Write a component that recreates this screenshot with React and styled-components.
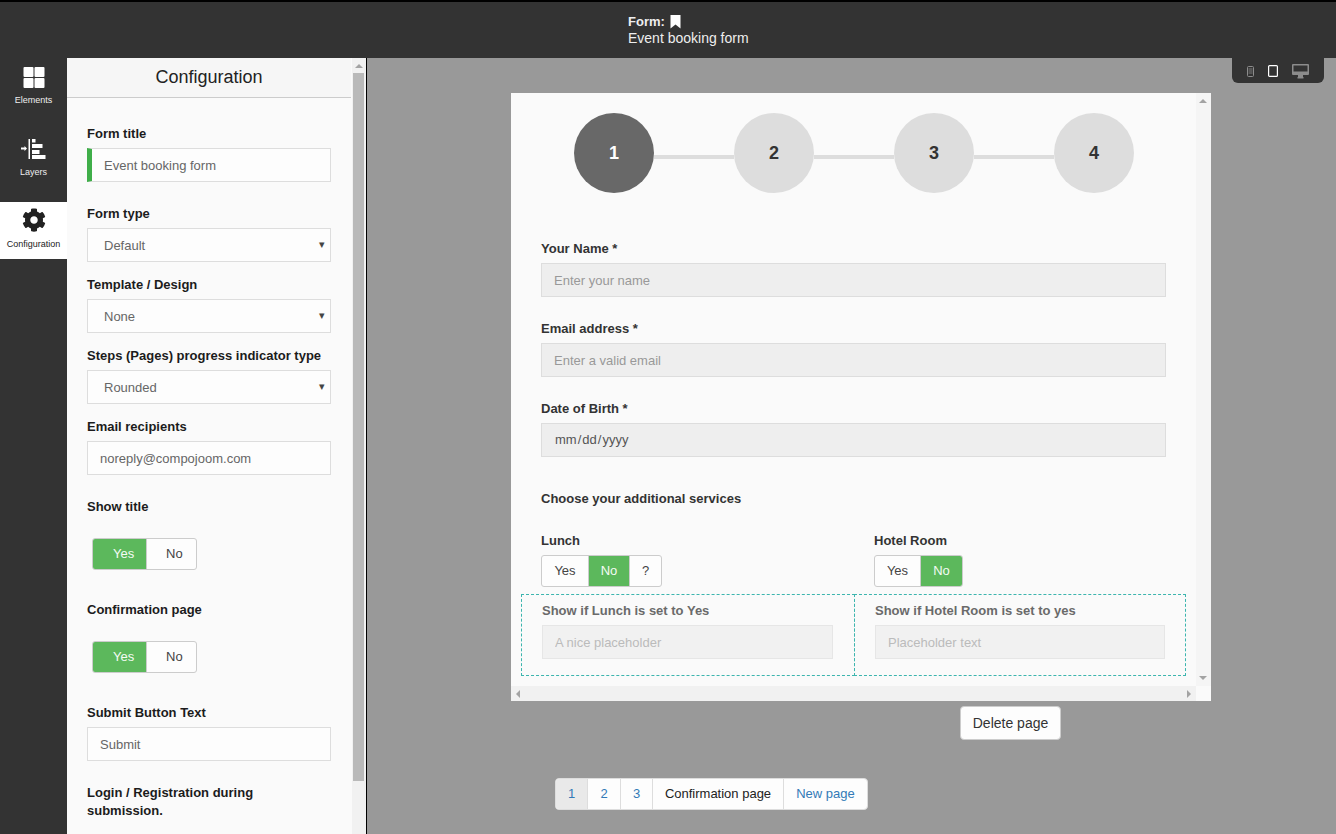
import styled, { createGlobalStyle } from "styled-components";
import { FaCog } from "react-icons/fa";

const GlobalStyle = createGlobalStyle`
  html, body {
    margin: 0;
    padding: 0;
    height: 100%;
    overflow: hidden;
    font-family: "Liberation Sans", Arial, sans-serif;
  }
  * {
    box-sizing: border-box;
  }
`;

const Page = styled.div`
  width: 1336px;
  height: 834px;
  display: flex;
  flex-direction: column;
  overflow: hidden;
  background: #333;
`;

const Header = styled.header`
  height: 58px;
  flex: none;
  border-top: 2px solid #000;
  padding: 11px 0 0 628px;
  background: #333;
  color: #eee;
  font-size: 14px;
  line-height: 17px;
`;

const HeaderTop = styled.div`
  display: flex;
  align-items: center;
  gap: 5px;
  font-size: 13px;
  font-weight: bold;
`;

const Body = styled.div`
  flex: 1;
  display: flex;
  min-height: 0;
`;

const Sidebar = styled.nav`
  width: 67px;
  flex: none;
  background: #333;
`;

const SideItem = styled.div`
  height: ${(p) => (p.$active ? "57px" : "72px")};
  padding-top: ${(p) => p.$top}px;
  display: flex;
  flex-direction: column;
  align-items: center;
  background: ${(p) => (p.$active ? "#fff" : "#333")};
  color: ${(p) => (p.$active ? "#222" : "#eee")};
  font-size: 9px;
  line-height: 11px;
  svg {
    display: block;
    flex: none;
  }
`;

const SideLabel = styled.span`
  margin-top: ${(p) => p.$gap}px;
`;

const Panel = styled.aside`
  width: 300px;
  flex: none;
  display: flex;
  background: #fafafa;
  border-right: 1px solid #000;
`;

const PanelBody = styled.div`
  width: 285px;
  flex: none;
  overflow: hidden;
`;

const PanelTitle = styled.h2`
  margin: 0 1px 0 0;
  height: 40px;
  background: #f6f6f6;
  border-bottom: 1px solid #ccc;
  color: #222;
  font-size: 18px;
  font-weight: normal;
  line-height: 38px;
  text-align: center;
`;

const PanelForm = styled.div`
  padding: 27px 20px 0;
`;

const PanelField = styled.div`
  margin-bottom: ${(p) => p.$after ?? 14}px;
`;

const PanelLabel = styled.label`
  display: block;
  margin-bottom: ${(p) => p.$gap ?? 5}px;
  color: #1c1c1c;
  font-size: 13px;
  font-weight: bold;
  line-height: 18px;
`;

const PanelInput = styled.input`
  display: block;
  width: 244px;
  height: 34px;
  background: #fdfdfd;
  border: 1px solid #ddd;
  border-left: ${(p) => (p.$marked ? "5px solid #3fae49" : "1px solid #ddd")};
  padding: 0 12px;
  color: #666;
  font-family: inherit;
  font-size: 13px;
  outline: none;
`;

const SelectWrap = styled.div`
  position: relative;
  width: 244px;
  &::after {
    content: "▾";
    position: absolute;
    top: 8px;
    right: 6px;
    color: #444;
    font-size: 11px;
    line-height: 16px;
  }
`;

const PanelSelect = styled.select`
  display: block;
  width: 100%;
  height: 34px;
  padding: 0 16px;
  appearance: none;
  background: #fdfdfd;
  border: 1px solid #ddd;
  border-radius: 0;
  color: #666;
  font-family: inherit;
  font-size: 13px;
  outline: none;
`;

const ToggleRow = styled.div`
  padding-left: 5px;
`;

const BtnGroup = styled.div`
  display: inline-flex;
  height: 32px;
  border: 1px solid #ccc;
  border-radius: 3px;
  background: #fdfdfd;
  overflow: hidden;
`;

const Btn = styled.span`
  width: ${(p) => p.$w}px;
  padding-left: ${(p) => p.$pad ?? 0}px;
  padding-bottom: 1px;
  display: flex;
  align-items: center;
  justify-content: ${(p) => (p.$pad ? "flex-start" : "center")};
  background: ${(p) => (p.$on ? "#5cb85c" : "transparent")};
  border-left: ${(p) => (p.$split ? "1px solid #ccc" : "none")};
  color: ${(p) => (p.$on ? "#f4fbf4" : "#444")};
  font-size: 13px;
`;

const Scrollbar = styled.div`
  width: 14px;
  flex: none;
  position: relative;
  background: #f1f1f1;
`;

const Thumb = styled.div`
  position: absolute;
  top: 15px;
  left: 1px;
  width: 11px;
  height: 708px;
  background: #b9b9b9;
`;

const Arrow = styled.i`
  position: absolute;
  width: 0;
  height: 0;
  ${(p) => p.$at};
  ${(p) =>
    p.$dir === "up" &&
    `border-left: 4px solid transparent; border-right: 4px solid transparent; border-bottom: 4px solid #a3a3a3;`}
  ${(p) =>
    p.$dir === "down" &&
    `border-left: 4px solid transparent; border-right: 4px solid transparent; border-top: 4px solid #a3a3a3;`}
  ${(p) =>
    p.$dir === "left" &&
    `border-top: 4px solid transparent; border-bottom: 4px solid transparent; border-right: 4px solid #a3a3a3;`}
  ${(p) =>
    p.$dir === "right" &&
    `border-top: 4px solid transparent; border-bottom: 4px solid transparent; border-left: 4px solid #a3a3a3;`}
`;

const Main = styled.main`
  flex: 1;
  position: relative;
  padding: 35px 0 0 144px;
  background: #999;
`;

const DeviceBar = styled.div`
  position: absolute;
  top: 0;
  right: 12px;
  width: 92px;
  height: 25px;
  display: flex;
  align-items: center;
  gap: 14px;
  padding: 1px 0 0 15px;
  background: #333;
  border-radius: 0 0 6px 6px;
  svg {
    display: block;
    flex: none;
  }
`;

const Canvas = styled.section`
  width: 700px;
  height: 608px;
  display: grid;
  grid-template-columns: 685px 15px;
  grid-template-rows: 593px 15px;
  background: #fafafa;
`;

const CanvasContent = styled.div`
  overflow: hidden;
  padding: 20px 0 0 30px;
`;

const CanvasVBar = styled.div`
  position: relative;
  background: #f5f5f5;
`;

const CanvasHBar = styled.div`
  position: relative;
  background: #f1f1f1;
`;

const CanvasCorner = styled.div`
  background: #fafafa;
`;

const Steps = styled.div`
  display: flex;
  align-items: center;
  margin: 0 0 47px 33px;
`;

const StepCircle = styled.div`
  width: 80px;
  height: 80px;
  flex: none;
  display: flex;
  align-items: center;
  justify-content: center;
  border-radius: 50%;
  background: ${(p) => (p.$current ? "#686868" : "#ddd")};
  color: ${(p) => (p.$current ? "#fff" : "#333")};
  font-size: 18px;
  font-weight: bold;
`;

const StepLine = styled.div`
  width: 80px;
  height: 4px;
  margin-top: 8px;
  flex: none;
  background: #ddd;
`;

const Field = styled.div`
  margin-bottom: ${(p) => p.$after ?? 23}px;
`;

const FieldLabel = styled.label`
  display: block;
  margin-bottom: 5px;
  color: ${(p) => (p.$muted ? "#6a6a6a" : "#333")};
  font-size: 13px;
  font-weight: bold;
  line-height: 18px;
`;

const FieldInput = styled.input`
  display: block;
  width: ${(p) => p.$w ?? 625}px;
  height: 34px;
  padding: 0 12px;
  background: ${(p) => (p.$muted ? "#f1f1f1" : "#eee")};
  border: 1px solid ${(p) => (p.$muted ? "#e6e6e6" : "#ddd")};
  color: #555;
  font-family: inherit;
  font-size: 13px;
  outline: none;
  &[type="date"] {
    padding-bottom: 2px;
  }
  &::placeholder {
    color: ${(p) => (p.$muted ? "#bbb" : "#999")};
    opacity: 1;
  }
  &::-webkit-calendar-picker-indicator {
    display: none;
  }
`;

const SectionTitle = styled.div`
  margin: 33px 0 24px;
  color: #333;
  font-size: 13px;
  font-weight: bold;
  line-height: 18px;
`;

const Columns = styled.div`
  display: flex;
  margin-bottom: 7px;
`;

const Column = styled.div`
  width: ${(p) => p.$w}px;
  flex: none;
`;

const CondRow = styled.div`
  display: flex;
  margin-left: -20px;
  width: 665px;
`;

const CondBox = styled.div`
  width: ${(p) => p.$w}px;
  height: 82px;
  flex: none;
  margin-left: ${(p) => (p.$tail ? "-1px" : "0")};
  padding: 7px 0 0 20px;
  border: 1px dashed #3cb5ae;
`;

const FooterRow = styled.div`
  width: 700px;
`;

const DeleteBtn = styled.button`
  display: block;
  width: 101px;
  height: 34px;
  margin: 5px 0 38px 449px;
  padding: 0;
  background: #fdfdfd;
  border: 1px solid #ccc;
  border-radius: 4px;
  color: #333;
  font-family: inherit;
  font-size: 14px;
`;

const Pager = styled.ul`
  display: inline-flex;
  height: 32px;
  margin: 0 0 0 44px;
  padding: 0;
  list-style: none;
  background: #fdfdfd;
  border: 1px solid #ddd;
  border-radius: 4px;
  overflow: hidden;
`;

const PagerItem = styled.li`
  width: ${(p) => p.$w}px;
  flex: none;
  padding-bottom: 1px;
  display: flex;
  align-items: center;
  justify-content: center;
  background: ${(p) => (p.$on ? "#e9e9e9" : "transparent")};
  border-left: ${(p) => (p.$first ? "none" : "1px solid #ddd")};
  color: ${(p) => (p.$plain ? "#222" : "#337ab7")};
  font-size: 13px;
`;

const Bookmark = () => (
  <svg width="11" height="14" viewBox="0 0 11 14" fill="#fff">
    <path d="M0.5 0H10.5V13.5L5.5 9.5L0.5 13.5Z" />
  </svg>
);

const GridIcon = () => (
  <svg width="22" height="22" viewBox="0 0 22 22" fill="#fff">
    <rect x="0.5" y="0" width="10" height="10" rx="1" />
    <rect x="11.5" y="0" width="10" height="10" rx="1" />
    <rect x="0.5" y="11" width="10" height="10" rx="1" />
    <rect x="11.5" y="11" width="10" height="10" rx="1" />
  </svg>
);

const LayersIcon = () => (
  <svg width="25" height="22" viewBox="0 0 25 22" fill="#fff">
    <path d="M0 9.5H3.5V8L6 10.5L3.5 13V11.5H0Z" />
    <rect x="7.5" y="1" width="1.5" height="20" />
    <rect x="11" y="1" width="3.5" height="3.5" />
    <rect x="11" y="6" width="10.5" height="4" />
    <rect x="11" y="12" width="7.5" height="4" />
    <rect x="11" y="17" width="13.5" height="4" />
  </svg>
);

const PhoneIcon = () => (
  <svg width="7" height="11" viewBox="0 0 7 11">
    <rect x="0.5" y="0.5" width="6" height="10" rx="1" fill="none" stroke="#8c8c8c" />
    <rect x="1.5" y="2" width="4" height="6" fill="#555" />
  </svg>
);

const TabletIcon = () => (
  <svg width="10" height="12" viewBox="0 0 10 12">
    <rect x="0.6" y="0.6" width="8.8" height="10.8" rx="1" fill="none" stroke="#fff" strokeWidth="1.2" />
  </svg>
);

const DesktopIcon = () => (
  <svg width="17" height="15" viewBox="0 0 17 15" fill="#8c8c8c">
    <path d="M1 0H16A1 1 0 0 1 17 1V10A1 1 0 0 1 16 11H1A1 1 0 0 1 0 10V1A1 1 0 0 1 1 0ZM1.5 1.5V7.5H15.5V1.5Z" fillRule="evenodd" />
    <rect x="6" y="11" width="5" height="2" />
    <rect x="5.5" y="13" width="6" height="1.5" />
  </svg>
);

const selectFields = [
  { label: "Form type", value: "Default" },
  { label: "Template / Design", value: "None" },
  { label: "Steps (Pages) progress indicator type", value: "Rounded" },
];

const mainFields = [
  { label: "Your Name *", placeholder: "Enter your name" },
  { label: "Email address *", placeholder: "Enter a valid email" },
];

const noop = () => {};

const App = () => {
  return (
    <Page>
      <GlobalStyle />
      <Header>
        <HeaderTop>
          Form: <Bookmark />
        </HeaderTop>
        <div>Event booking form</div>
      </Header>
      <Body>
        <Sidebar>
          <SideItem $top={9}>
            <GridIcon />
            <SideLabel $gap={6}>Elements</SideLabel>
          </SideItem>
          <SideItem $top={8}>
            <LayersIcon />
            <SideLabel $gap={7}>Layers</SideLabel>
          </SideItem>
          <SideItem $active $top={6}>
            <FaCog size={24} color="#222" />
            <SideLabel $gap={7}>Configuration</SideLabel>
          </SideItem>
        </Sidebar>

        <Panel>
          <PanelBody>
            <PanelTitle>Configuration</PanelTitle>
            <PanelForm>
              <PanelField $after={23}>
                <PanelLabel>Form title</PanelLabel>
                <PanelInput $marked readOnly value="Event booking form" onChange={noop} />
              </PanelField>
              {selectFields.map((f) => (
                <PanelField key={f.label}>
                  <PanelLabel>{f.label}</PanelLabel>
                  <SelectWrap>
                    <PanelSelect value={f.value} onChange={noop}>
                      <option>{f.value}</option>
                    </PanelSelect>
                  </SelectWrap>
                </PanelField>
              ))}
              <PanelField $after={23}>
                <PanelLabel>Email recipients</PanelLabel>
                <PanelInput readOnly value="noreply@compojoom.com" onChange={noop} />
              </PanelField>
              <PanelField $after={31}>
                <PanelLabel $gap={22}>Show title</PanelLabel>
                <ToggleRow>
                  <BtnGroup>
                    <Btn $w={53} $pad={20} $on>Yes</Btn>
                    <Btn $w={50} $pad={19} $split>No</Btn>
                  </BtnGroup>
                </ToggleRow>
              </PanelField>
              <PanelField $after={31}>
                <PanelLabel $gap={22}>Confirmation page</PanelLabel>
                <ToggleRow>
                  <BtnGroup>
                    <Btn $w={53} $pad={20} $on>Yes</Btn>
                    <Btn $w={50} $pad={19} $split>No</Btn>
                  </BtnGroup>
                </ToggleRow>
              </PanelField>
              <PanelField $after={23}>
                <PanelLabel>Submit Button Text</PanelLabel>
                <PanelInput readOnly value="Submit" onChange={noop} />
              </PanelField>
              <PanelLabel>Login / Registration during submission.</PanelLabel>
            </PanelForm>
          </PanelBody>
          <Scrollbar>
            <Arrow $dir="up" $at="top: 6px; left: 3px" />
            <Thumb />
          </Scrollbar>
        </Panel>

        <Main>
          <DeviceBar>
            <PhoneIcon />
            <TabletIcon />
            <DesktopIcon />
          </DeviceBar>

          <Canvas>
            <CanvasContent>
              <Steps>
                <StepCircle $current>1</StepCircle>
                <StepLine />
                <StepCircle>2</StepCircle>
                <StepLine />
                <StepCircle>3</StepCircle>
                <StepLine />
                <StepCircle>4</StepCircle>
              </Steps>
              {mainFields.map((f) => (
                <Field key={f.label}>
                  <FieldLabel>{f.label}</FieldLabel>
                  <FieldInput readOnly placeholder={f.placeholder} />
                </Field>
              ))}
              <Field $after={0}>
                <FieldLabel>Date of Birth *</FieldLabel>
                <FieldInput type="date" readOnly />
              </Field>
              <SectionTitle>Choose your additional services</SectionTitle>
              <Columns>
                <Column $w={333}>
                  <FieldLabel>Lunch</FieldLabel>
                  <BtnGroup>
                    <Btn $w={46}>Yes</Btn>
                    <Btn $w={41} $on $split>No</Btn>
                    <Btn $w={32} $split>?</Btn>
                  </BtnGroup>
                </Column>
                <Column $w={290}>
                  <FieldLabel>Hotel Room</FieldLabel>
                  <BtnGroup>
                    <Btn $w={45}>Yes</Btn>
                    <Btn $w={42} $on $split>No</Btn>
                  </BtnGroup>
                </Column>
              </Columns>
              <CondRow>
                <CondBox $w={334}>
                  <FieldLabel $muted>Show if Lunch is set to Yes</FieldLabel>
                  <FieldInput $muted $w={291} readOnly placeholder="A nice placeholder" />
                </CondBox>
                <CondBox $w={332} $tail>
                  <FieldLabel $muted>Show if Hotel Room is set to yes</FieldLabel>
                  <FieldInput $muted $w={290} readOnly placeholder="Placeholder text" />
                </CondBox>
              </CondRow>
            </CanvasContent>
            <CanvasVBar>
              <Arrow $dir="up" $at="top: 6px; left: 3px" />
              <Arrow $dir="down" $at="bottom: 6px; left: 3px" />
            </CanvasVBar>
            <CanvasHBar>
              <Arrow $dir="left" $at="top: 4px; left: 5px" />
              <Arrow $dir="right" $at="top: 4px; right: 5px" />
            </CanvasHBar>
            <CanvasCorner />
          </Canvas>

          <FooterRow>
            <DeleteBtn>Delete page</DeleteBtn>
            <Pager>
              <PagerItem $w={31} $first $on>1</PagerItem>
              <PagerItem $w={33}>2</PagerItem>
              <PagerItem $w={32}>3</PagerItem>
              <PagerItem $w={131} $plain>Confirmation page</PagerItem>
              <PagerItem $w={84}>New page</PagerItem>
            </Pager>
          </FooterRow>
        </Main>
      </Body>
    </Page>
  );
};

export default App;
